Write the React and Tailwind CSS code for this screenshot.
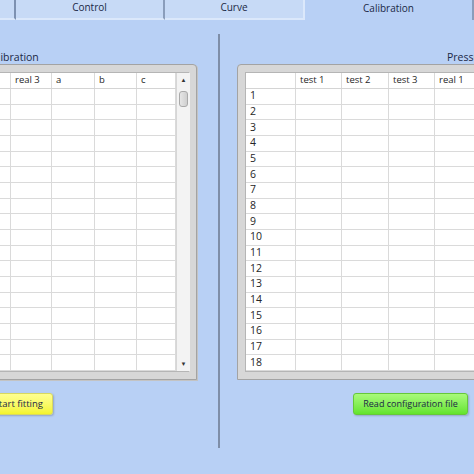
import React from 'react';

const rows = Array.from({ length: 18 }, (_, i) => i + 1);

// left table: only the right part of it is visible in the window
const leftCols = [
  { label: 'real 2', w: 'w-[62px]' },
  { label: 'real 3', w: 'w-[41px]' },
  { label: 'a', w: 'w-[43px]' },
  { label: 'b', w: 'w-[42px]' },
  { label: 'c', w: 'w-[39px]' },
];

const rightCols = [
  { label: '', w: 'w-[50px]' },
  { label: 'test 1', w: 'w-[46px]' },
  { label: 'test 2', w: 'w-[47px]' },
  { label: 'test 3', w: 'w-[46px]' },
  { label: 'real 1', w: 'w-[60px]' },
  { label: 'real 2', w: 'w-[60px]' },
];

const Tab = ({ label, className }) => (
  <div className={`h-[20px] flex items-center justify-center pb-[3px] text-[10px] text-[#1a2846] ${className}`}>
    {label}
  </div>
);

const Cell = ({ w, big, children }) => (
  <div className={`${w} shrink-0 h-full border-r border-[#dadada] pl-[4px] flex items-center ${big ? 'text-[10.5px]' : 'text-[9.5px]'} text-[#262626] whitespace-nowrap overflow-hidden`}>
    {children}
  </div>
);

const Grid = ({ cols, numbered }) => (
  <div className="flex-1 flex flex-col">
    <div className="flex h-[16px] border-b border-[#d4d4d4]">
      {cols.map((c) => (
        <Cell key={c.label + c.w} w={c.w}>{c.label}</Cell>
      ))}
    </div>
    {rows.map((r) => (
      <div key={r} className="flex h-[15.67px] border-b border-[#dadada]">
        {cols.map((c, i) => (
          <Cell key={i} w={c.w} big>{numbered && i === 0 ? r : ''}</Cell>
        ))}
      </div>
    ))}
  </div>
);

const ScrollBar = () => (
  <div className="w-[14px] shrink-0 bg-[#f3f3f3] border-l border-[#d6d6d6] flex flex-col items-center">
    <div className="h-[14px] flex items-center justify-center text-[6px] text-[#333]">▲</div>
    <div className="w-[9px] h-[16px] mt-[4px] rounded-[3px] border border-[#a9a9a9] bg-gradient-to-r from-[#e6e6e6] to-[#cfcfcf]" />
    <div className="flex-1" />
    <div className="h-[14px] flex items-center justify-center text-[6px] text-[#333]">▼</div>
  </div>
);

export default function App() {
  return (
    <div className="w-[474px] h-[474px] overflow-hidden bg-[#b8d0f5] flex flex-col font-['Open_Sans',sans-serif]">
      <div className="flex shrink-0">
        <Tab label="" className="w-[16px] bg-[#c7daf6] border-r-2 border-r-[#7d91b1] border-b-2 border-b-[#dbe8fb]" />
        <Tab label="Control" className="w-[149px] bg-[#c7daf6] border-r-2 border-r-[#8a9dbb] border-b-2 border-b-[#dbe8fb]" />
        <Tab label="Curve" className="w-[140px] bg-[#c7daf6] border-r-2 border-r-[#dbe8fb] border-b-2 border-b-[#dbe8fb]" />
        <Tab label="Calibration" className="w-[169px] border-r-2 border-r-[#8a9dbb]" />
      </div>

      <div className="flex flex-1">
        <div className="w-[218px] shrink-0 overflow-hidden pt-[30px]">
          <div className="h-[14px] leading-[14px] -ml-[80px] text-[10.5px] text-[#1a2846] whitespace-nowrap">
            Temperature calibration
          </div>
          <div className="-ml-[60px] w-[257px] h-[316px] p-[7px] rounded-tr-[4px] border border-[#a3a3a3] bg-[#d7d7d7] shadow-[1px_1px_0_#c3c3c3]">
            <div className="h-full flex bg-white border border-[#b5b5b5]">
              <Grid cols={leftCols} />
              <ScrollBar />
            </div>
          </div>
          <button className="mt-[13px] -ml-[20px] w-[73px] h-[22px] flex items-center justify-end pr-[9px] rounded-[3px] border border-[#d8d860] bg-gradient-to-b from-[#ffff90] to-[#f4f42a] shadow-[1px_1px_2px_rgba(0,0,0,0.2)] text-[9.5px] text-[#1a2846] whitespace-nowrap">
            Start fitting
          </button>
        </div>

        <div className="w-[2px] shrink-0 mt-[14px] h-[414px] bg-[#7e8ea8]" />

        <div className="flex-1 overflow-hidden pt-[30px]">
          <div className="h-[14px] leading-[14px] pl-[227px] text-[10.5px] text-[#1a2846] whitespace-nowrap">
            Pressure calibration
          </div>
          <div className="ml-[17px] w-[320px] h-[316px] p-[7px] rounded-tl-[4px] border border-[#a3a3a3] bg-[#d7d7d7]">
            <div className="h-full flex bg-white border border-[#b5b5b5]">
              <Grid cols={rightCols} numbered />
            </div>
          </div>
          <button className="mt-[13px] ml-[133px] w-[115px] h-[22px] rounded-[3px] border border-[#66c83a] bg-gradient-to-b from-[#a8fa7a] to-[#62e42a] shadow-[1px_1px_2px_rgba(0,0,0,0.2)] text-[9px] text-[#1a2846] whitespace-nowrap">
            Read configuration file
          </button>
        </div>
      </div>
    </div>
  );
}
